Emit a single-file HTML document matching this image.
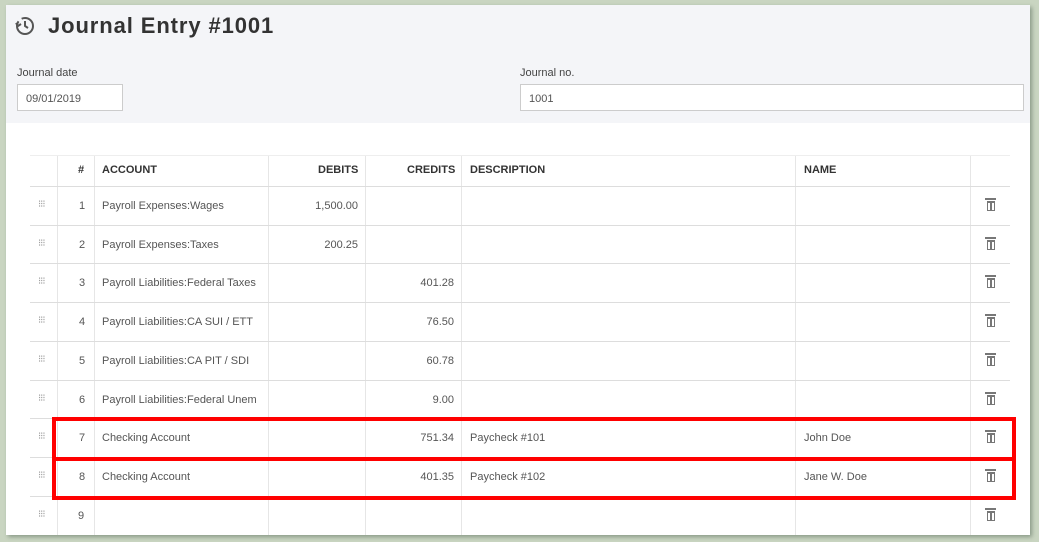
<!DOCTYPE html><html><head><style>
body{margin:0;width:1039px;height:542px;background:#c9d5c1;font-family:"Liberation Sans",sans-serif;position:relative;overflow:hidden}
.card{position:absolute;left:6px;top:5px;width:1024px;height:530px;background:#fff;box-shadow:2px 2px 4px #8a9a88}
.hdr{position:absolute;left:0;top:0;width:1024px;height:118px;background:#f4f5f8}
.t{position:absolute;left:42px;top:8px;font-size:22px;font-weight:bold;color:#333;letter-spacing:0.9px}
.lbl{position:absolute;font-size:11px;color:#444}
.inp{position:absolute;background:#fff;border:1px solid #ccc;font-size:11px;color:#555;box-sizing:border-box;padding:8px}
.c{position:absolute;font-size:11px;color:#555}
.h{font-weight:bold;color:#333;font-size:11px}
.hl{position:absolute;height:1px;background:#ddd}
.vl{position:absolute;width:1px;background:#e6e6e6}
.red{position:absolute;border:4px solid #f00;box-sizing:border-box}
.tr{position:absolute;width:8px;height:10px;border:1.5px solid #777;border-top-width:2px;box-sizing:border-box}
.tr:before{content:"";position:absolute;left:-3px;top:-5px;width:11px;height:2px;background:#777}
.tr:after{content:"";position:absolute;left:1.5px;top:0;width:2px;height:7px;border-left:1px solid #777;border-right:1px solid #777;box-sizing:border-box}
.dr{position:absolute;color:#999;font-size:10px;letter-spacing:-1px}
</style></head><body>
<div class="card">
<div class="hdr"></div>
<svg style="position:absolute;left:7px;top:9px" width="24" height="24" viewBox="0 0 24 24"><circle cx="12" cy="12" r="8" fill="none" stroke="#555" stroke-width="2" stroke-dasharray="30 4"/><path d="M12 7v5l3 2" stroke="#555" stroke-width="2" fill="none"/><path d="M3 9l2 3 3-2" stroke="#555" stroke-width="2" fill="none"/></svg>
<div class="t">Journal Entry #1001</div>
<div class="lbl" style="left:11px;top:62px">Journal date</div>
<div class="inp" style="left:11px;top:79px;width:106px;height:27px">09/01/2019</div>
<div class="lbl" style="left:514px;top:62px">Journal no.</div>
<div class="inp" style="left:514px;top:79px;width:504px;height:27px">1001</div>
</div>
<div id="tb"></div>
<script>
var tb=document.getElementById('tb'),h='';
var cols=[30,57,94,268,365,461,795,970,1010];
for(var i=1;i<8;i++)h+='<div class="vl" style="left:'+cols[i]+'px;top:155px;height:380px"></div>';
h+='<div class="c h" style="left:78px;top:164px">#</div><div class="c h" style="left:102px;top:164px">ACCOUNT</div><div class="c h" style="left:318px;top:164px">DEBITS</div><div class="c h" style="left:407px;top:164px">CREDITS</div><div class="c h" style="left:470px;top:164px">DESCRIPTION</div><div class="c h" style="left:804px;top:164px">NAME</div>';
var rows=[["Payroll Expenses:Wages","1,500.00","","",""],["Payroll Expenses:Taxes","200.25","","",""],["Payroll Liabilities:Federal Taxes","","401.28","",""],["Payroll Liabilities:CA SUI / ETT","","76.50","",""],["Payroll Liabilities:CA PIT / SDI","","60.78","",""],["Payroll Liabilities:Federal Unem","","9.00","",""],["Checking Account","","751.34","Paycheck #101","John Doe"],["Checking Account","","401.35","Paycheck #102","Jane W. Doe"],["","","","",""]];
for(var r=0;r<9;r++){var y=186+r*38.7;
h+='<div class="hl" style="left:30px;width:980px;top:'+y+'px"></div>';
var ty=y+14;
h+='<div class="dr" style="left:38px;top:'+(ty-1)+'px">⁝⁝⁝</div>';
h+='<div class="c" style="left:'+(r==8?78:79)+'px;top:'+ty+'px">'+(r+1)+'</div>';
h+='<div class="c" style="left:102px;top:'+ty+'px;width:166px;overflow:hidden;white-space:nowrap">'+rows[r][0]+'</div>';
h+='<div class="c" style="right:'+(1039-358)+'px;top:'+ty+'px">'+rows[r][1]+'</div>';
h+='<div class="c" style="right:'+(1039-454)+'px;top:'+ty+'px">'+rows[r][2]+'</div>';
h+='<div class="c" style="left:470px;top:'+ty+'px">'+rows[r][3]+'</div>';
h+='<div class="c" style="left:804px;top:'+ty+'px">'+rows[r][4]+'</div>';
h+='<div class="tr" style="left:987px;top:'+(ty+1)+'px"></div>';}
h+='<div class="hl" style="left:30px;width:980px;top:155px;background:#eee"></div>';
h+='<div class="red" style="left:52px;top:417px;width:964px;height:44px"></div><div class="red" style="left:52px;top:457px;width:964px;height:43px"></div>';
tb.innerHTML=h;
</script>
</body></html>
